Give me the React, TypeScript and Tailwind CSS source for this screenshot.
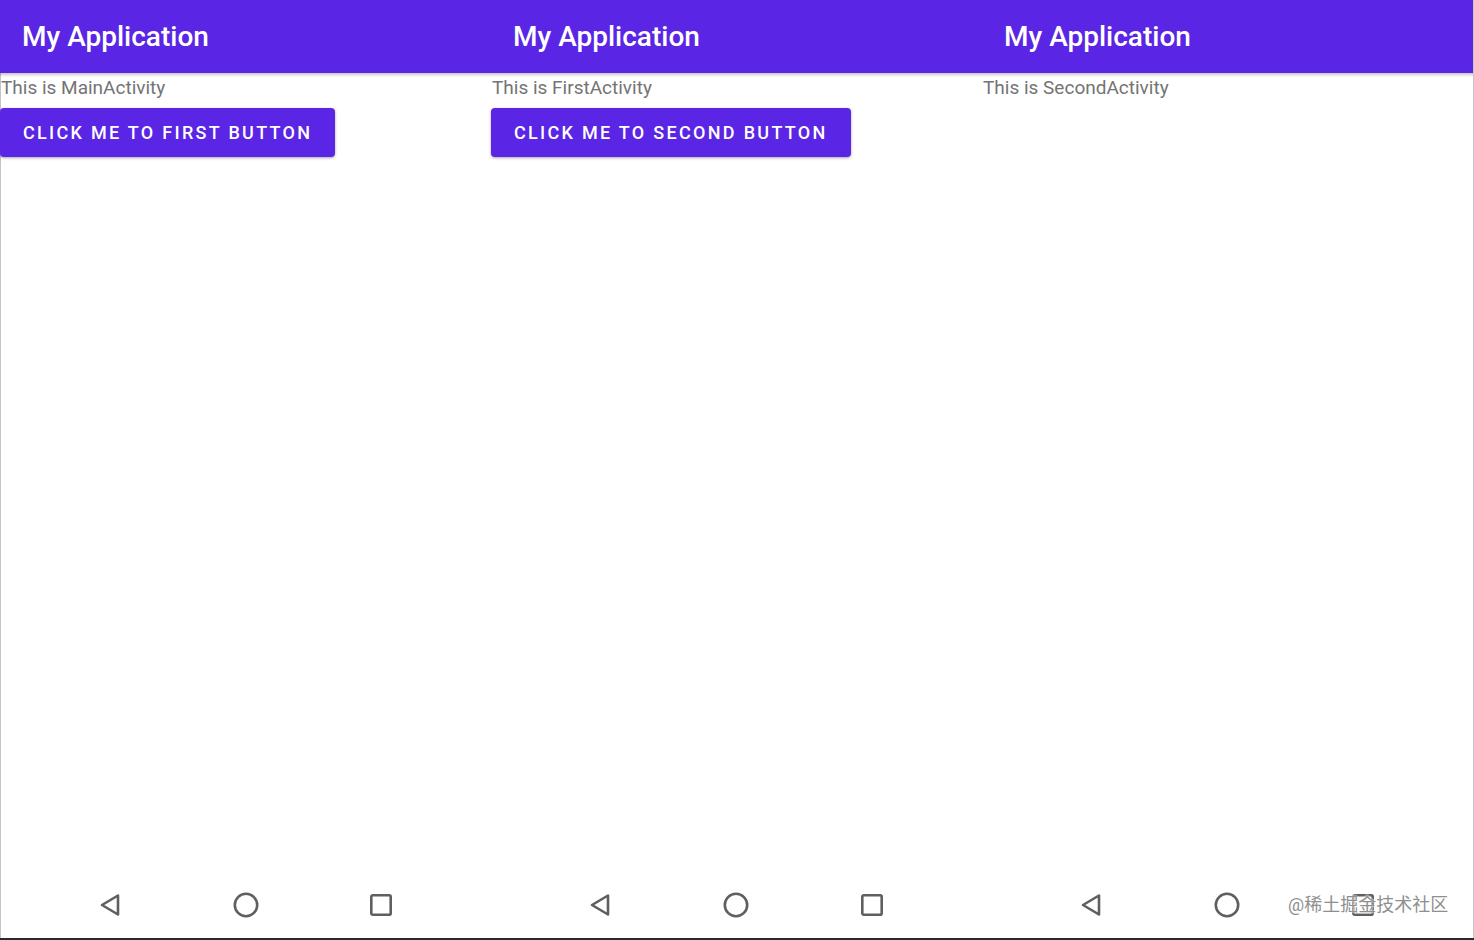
import React from "react";

const font = { fontFamily: "Roboto, 'Noto Sans', sans-serif" };

function NavBar() {
  return (
    <div className="h-[61px] pb-[5px] flex items-center shrink-0">
      <div className="w-[220px] flex justify-center">
        <svg width="26" height="26" viewBox="0 0 26 26">
          <path d="M20 3.5 L20 22.5 L4 13 Z" fill="none" stroke="#5f5f5f" strokeWidth="2.6" strokeLinejoin="round" />
        </svg>
      </div>
      <div className="w-[52px] flex justify-center">
        <svg width="28" height="28" viewBox="0 0 28 28">
          <circle cx="14" cy="14" r="11.2" fill="none" stroke="#5f5f5f" strokeWidth="2.6" />
        </svg>
      </div>
      <div className="w-[220px] flex justify-center">
        <svg width="26" height="26" viewBox="0 0 26 26">
          <rect x="3.3" y="3.3" width="19.4" height="19.4" rx="1.5" fill="none" stroke="#5f5f5f" strokeWidth="2.6" />
        </svg>
      </div>
    </div>
  );
}

function Screen({ text, button, first }: { text: string; button?: string; first?: boolean }) {
  return (
    <div className="w-[491px] h-full flex flex-col bg-white">
      <div className="h-[73px] bg-[#5a25e4] flex items-center pl-[22px] relative z-10 shrink-0">
        <span className="text-white text-[28px] font-medium leading-none">My Application</span>
        <div className="absolute left-0 right-0 top-full h-[4px] bg-gradient-to-b from-[rgba(0,0,0,0.22)] to-transparent" />
      </div>
      <div className={first ? "flex-1 flex flex-col border-l border-[#c4c4c4]" : "flex-1 flex flex-col"}>
        <div className="flex-1 flex flex-col items-start">
          <div className={first ? "text-[19px] leading-[22px] text-[#747474] mt-[4px]" : "text-[19px] leading-[22px] text-[#747474] mt-[4px] pl-[1px]"}>{text}</div>
          {button && (
            <div className={first ? "mt-[9px] -ml-[1px] h-[49px] bg-[#5a25e4] rounded-[4px] flex items-center px-[23px] shadow-[0_1px_3px_rgba(0,0,0,0.35)]" : "mt-[9px] h-[49px] bg-[#5a25e4] rounded-[4px] flex items-center px-[23px] shadow-[0_1px_3px_rgba(0,0,0,0.35)]"}>
              <span className="text-white text-[18px] font-medium tracking-[2.3px] leading-none">{button}</span>
            </div>
          )}
        </div>
        <NavBar />
      </div>
    </div>
  );
}

export default function App() {
  return (
    <div className="w-[1474px] h-[940px] bg-white overflow-hidden relative" style={font}>
      <div className="h-[938px] flex border-r-2 border-r-[#c8c8c8]">
        <Screen text="This is MainActivity" button="CLICK ME TO FIRST BUTTON" first />
        <Screen text="This is FirstActivity" button="CLICK ME TO SECOND BUTTON" />
        <Screen text="This is SecondActivity" />
      </div>
      <div className="h-[2px] bg-[#2a2a2a]" />
      <div
        className="absolute left-[1288px] top-[893px] text-[18px] leading-[24px] text-[#8f8f8f] whitespace-nowrap"
        style={{ fontFamily: "Roboto, 'Noto Sans CJK SC', sans-serif", textShadow: "0 0 2px #fff, 0 0 2px #fff" }}
      >
        @稀土掘金技术社区
      </div>
    </div>
  );
}
